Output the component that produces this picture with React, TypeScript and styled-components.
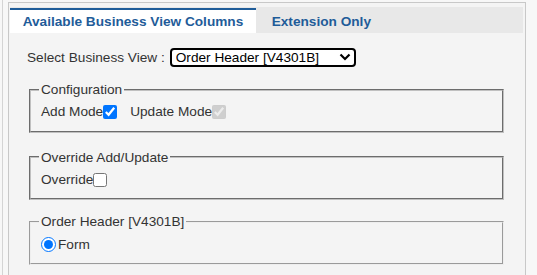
import React from 'react';
import styled, { createGlobalStyle } from 'styled-components';

const GlobalStyle = createGlobalStyle`
	html, body {
		margin: 0;
		padding: 0;
		background: #f7f7f7;
	}
	body {
		font-family: 'Liberation Sans', Arial, sans-serif;
		font-size: 13.65px;
		color: #333;
	}
`;

const Page = styled.div`
	margin-left: 2px;
	min-height: 275px;
	border-left: 1px solid #d4d4d4;
	padding: 2px 0 0 5px;
	box-sizing: border-box;
`;

const Panel = styled.div`
	width: 518px;
	min-height: 273px;
	box-sizing: border-box;
	border: 1px solid #c8c8c8;
	border-bottom: none;
	padding: 4px 2px 0 1px;
	background: #f4f4f4;
`;

const TabBar = styled.div`
	display: flex;
	align-items: flex-end;
	height: 26px;
	background: #e8e8e8;
`;

const Tab = styled.div<{ $active?: boolean }>`
	height: 25px;
	box-sizing: border-box;
	padding: 0 12.7px;
	margin-right: 3px;
	display: flex;
	align-items: center;
	font-weight: bold;
	color: #1f5c99;
	background: ${(p) => (p.$active ? '#ffffff' : 'transparent')};
	border-top: 2px solid ${(p) => (p.$active ? '#1f5c99' : 'transparent')};
`;

const Content = styled.div`
	padding: 15px 17px 0 17px;
`;

const SelectRow = styled.div`
	display: flex;
	align-items: center;
	height: 19px;
`;

const Label = styled.span`
	margin-right: 5px;
`;

const SelectWrap = styled.div`
	position: relative;
	width: 186px;
	height: 19px;
`;

const Select = styled.select`
	appearance: none;
	width: 100%;
	height: 100%;
	box-sizing: border-box;
	border: 2px solid #000;
	border-radius: 4px;
	background: #fff;
	color: #000;
	font-family: inherit;
	font-size: 13.65px;
	padding: 0 0 0 4px;
	outline: none;
`;

const Chevron = styled.svg`
	position: absolute;
	right: 5px;
	top: 5px;
	pointer-events: none;
`;

const Fieldset = styled.fieldset<{ $gap: number; $light?: boolean }>`
	margin: ${(p) => p.$gap}px 2px 0;
	padding: 5px 10px 8.5px;
	border: 2px groove ${(p) => (p.$light ? '#eeeeee' : '#c0c0c0')};
`;

const Legend = styled.legend`
	padding: 0 2px;
	margin-left: -2px;
`;

const Row = styled.div`
	line-height: 19px;
`;

const Check = styled.input`
	width: 14px;
	height: 14px;
	margin: 3px 13px 3px 0;
	vertical-align: -3px;
`;

const Radio = styled.input`
	width: 15px;
	height: 15px;
	margin: 3px 2px 0 0;
	vertical-align: -3px;
`;

export default function App() {
	return (
		<>
			<GlobalStyle />
			<Page>
				<Panel>
					<TabBar>
						<Tab $active>Available Business View Columns</Tab>
						<Tab>Extension Only</Tab>
					</TabBar>
					<Content>
						<SelectRow>
							<Label>Select Business View :</Label>
							<SelectWrap>
								<Select defaultValue='V4301B'>
									<option value='V4301B'>Order Header [V4301B]</option>
								</Select>
								<Chevron width='12' height='8' viewBox='0 0 12 8'>
									<path d='M1.5 1.5 L6 6 L10.5 1.5' fill='none' stroke='#000' strokeWidth='2.2' />
								</Chevron>
							</SelectWrap>
						</SelectRow>

						<Fieldset $gap={15}>
							<Legend>Configuration</Legend>
							<Row>
								Add Mode<Check type='checkbox' defaultChecked />
								Update Mode<Check type='checkbox' defaultChecked disabled />
							</Row>
						</Fieldset>

						<Fieldset $gap={17}>
							<Legend>Override Add/Update</Legend>
							<Row>
								Override<Check type='checkbox' />
							</Row>
						</Fieldset>

						<Fieldset $gap={14} $light>
							<Legend>Order Header [V4301B]</Legend>
							<Row>
								<Radio type='radio' name='bv' defaultChecked />
								Form
							</Row>
						</Fieldset>
					</Content>
				</Panel>
			</Page>
		</>
	);
}
